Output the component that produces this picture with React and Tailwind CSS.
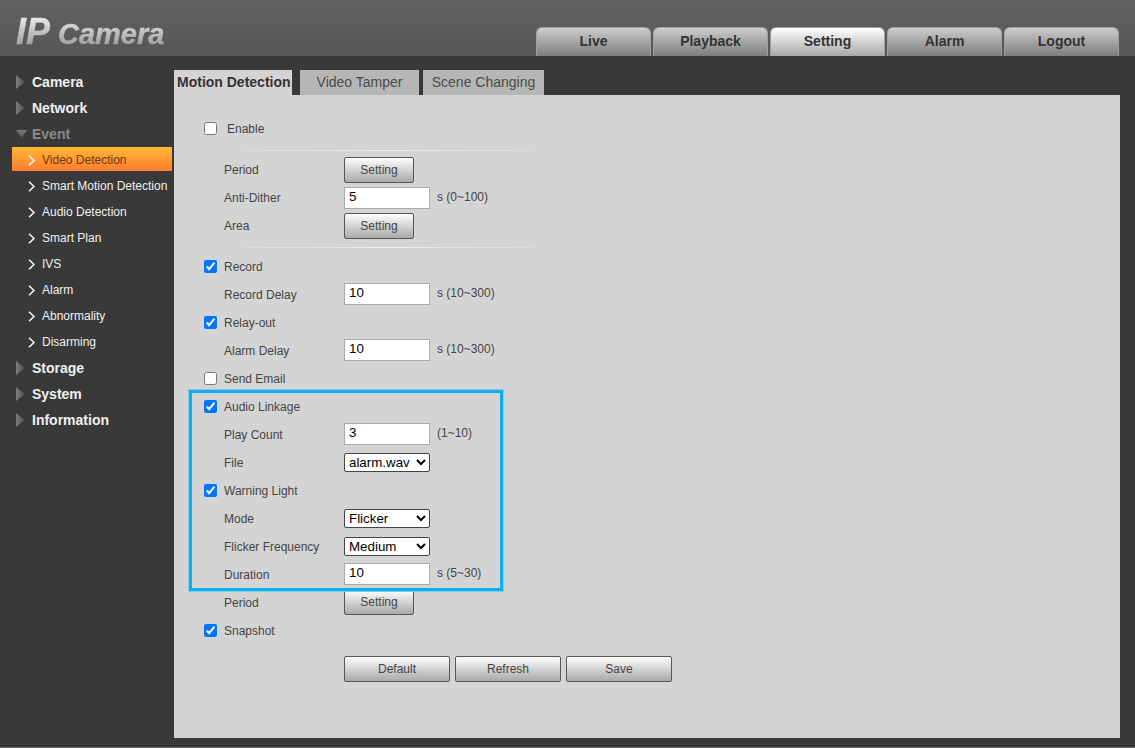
const NAV_TABS = ['Live', 'Playback', 'Setting', 'Alarm', 'Logout'];
const SUB_ITEMS = [
  'Video Detection',
  'Smart Motion Detection',
  'Audio Detection',
  'Smart Plan',
  'IVS',
  'Alarm',
  'Abnormality',
  'Disarming',
];

function Triangle({ down }) {
  return (
    <svg width="12" height="14" viewBox="0 0 12 14" className="shrink-0" aria-hidden="true">
      <defs>
        <linearGradient id="tri-right" x1="0" y1="0" x2="1" y2="0">
          <stop offset="0" stopColor="#7c7c7c" />
          <stop offset="1" stopColor="#4c4c4c" />
        </linearGradient>
        <linearGradient id="tri-down" x1="0" y1="0" x2="0" y2="1">
          <stop offset="0" stopColor="#7c7c7c" />
          <stop offset="1" stopColor="#4c4c4c" />
        </linearGradient>
      </defs>
      {down ? (
        <polygon points="1,3 12,3 6.5,11" fill="url(#tri-down)" />
      ) : (
        <polygon points="1,0 10,7 1,14" fill="url(#tri-right)" />
      )}
    </svg>
  );
}

function Chevron() {
  return (
    <svg width="7" height="11" viewBox="0 0 7 11" fill="none" stroke="#fff" strokeWidth="1.4" className="shrink-0" aria-hidden="true">
      <polyline points="1,0.7 6,5.5 1,10.3" />
    </svg>
  );
}

function MenuHead({ label, down, muted }) {
  return (
    <div className="flex h-[26px] items-center pl-[15px]">
      <Triangle down={down} />
      <span className={`ml-[5px] text-[14px] font-bold ${muted ? 'text-[#8a8a8a]' : 'text-[#f0f0f0]'}`}>{label}</span>
    </div>
  );
}

function Sidebar() {
  return (
    <aside className="w-[174px] shrink-0 pt-[13px]">
      <MenuHead label="Camera" />
      <MenuHead label="Network" />
      <MenuHead label="Event" down muted />
      <div className="mb-px">
        {SUB_ITEMS.map((item, i) => (
          <div
            key={item}
            className={`ml-3 flex w-40 items-center gap-[7px] pl-4 pt-[2px] text-[12px] ${
              i === 0
                ? 'mb-px h-6 bg-gradient-to-b from-[#ffb836] to-[#ff7a30] text-[#6a3a12]'
                : 'h-[26px] text-[#f0f0f0]'
            }`}
          >
            <Chevron />
            <span className="whitespace-nowrap">{item}</span>
          </div>
        ))}
      </div>
      <MenuHead label="Storage" />
      <MenuHead label="System" />
      <MenuHead label="Information" />
    </aside>
  );
}

function Button({ children, wide }) {
  return (
    <button
      type="button"
      className={`h-[26px] rounded-[2px] border border-[#555] bg-gradient-to-b from-white to-[#a9a9a9] text-[12px] text-[#444] ${
        wide ? 'w-[106px]' : 'w-[70px]'
      }`}
    >
      {children}
    </button>
  );
}

function TextBox({ value }) {
  return (
    <input
      type="text"
      defaultValue={value}
      className="h-[22px] w-[86px] border border-[#a9a9a9] bg-white px-1 pb-[3px] text-[13.33px] text-black"
    />
  );
}

function Dropdown({ value }) {
  return (
    <select
      defaultValue={value}
      className="h-[19px] w-[86px] rounded-[2px] border border-[#444] bg-white text-[13.33px] text-black"
    >
      <option>{value}</option>
    </select>
  );
}

function Row({ label, children, hint, raised }) {
  return (
    <div className="flex h-7 items-center pl-[50px] text-[12px] text-[#444]">
      <span className={`w-[120px] shrink-0 whitespace-nowrap ${raised ? 'pb-px' : 'pt-px'}`}>{label}</span>
      {children}
      {hint && <span className="ml-[7px] whitespace-nowrap pb-[2px]">{hint}</span>}
    </div>
  );
}

function CheckRow({ label, checked, enable }) {
  return (
    <label className="flex h-7 items-center pl-[30px] text-[12px] text-[#444]">
      <input type="checkbox" defaultChecked={checked} className="m-0 h-[13px] w-[13px]" />
      <span className={`pt-[2px] ${enable ? 'ml-[10px]' : 'ml-[7px]'}`}>{label}</span>
    </label>
  );
}

function Divider({ className }) {
  return (
    <div className={`ml-[71px] h-px w-[288px] bg-gradient-to-r from-[#dcdcdc] via-[#ececec] to-[#dcdcdc] ${className}`} />
  );
}

export default function App() {
  return (
    <div className="flex h-[748px] w-[1135px] flex-col overflow-hidden bg-[#393939] font-['Liberation_Sans',Arial,sans-serif]">
      {/* Top bar */}
      <header className="flex h-14 shrink-0 items-end justify-between bg-gradient-to-b from-[#626262] to-[#565656] pl-4 pr-4">
        <div className="mb-1 self-end whitespace-nowrap bg-gradient-to-b from-[#f4f4f4] to-[#8e8e8e] bg-clip-text pb-[2px] font-bold italic leading-none text-transparent [-webkit-text-stroke:0.5px_transparent]">
          <span className="text-[36px]">IP</span>
          <span className="ml-2 text-[29px]">Camera</span>
        </div>
        <nav className="flex gap-[2px]">
          {NAV_TABS.map((tab) => (
            <div
              key={tab}
              className={`flex h-[29px] w-[115px] items-center justify-center rounded-t-[6px] border border-b-0 border-[#a0a0a0] pb-[2px] text-[14px] font-bold text-[#333] ${
                tab === 'Setting'
                  ? 'bg-gradient-to-b from-white to-[#a8a8a8]'
                  : 'bg-gradient-to-b from-[#cdcdcd] to-[#7e7e7e]'
              }`}
            >
              {tab}
            </div>
          ))}
        </nav>
      </header>

      <div className="flex min-h-0 flex-1">
        <Sidebar />
        <main className="flex w-[946px] flex-col pt-[14px] pb-[9px]">
          {/* Sub tabs */}
          <div className="flex h-[25px] shrink-0 text-[14px]">
            <div className="flex w-[118px] items-center whitespace-nowrap bg-[#d4d4d4] pl-[3px] font-bold text-[#333]">
              Motion Detection
            </div>
            <div className="ml-2 flex w-[119px] items-center justify-center whitespace-nowrap bg-[#b6b6b6] text-[#4a4a4a]">
              Video Tamper
            </div>
            <div className="ml-1 flex w-[121px] items-center justify-center whitespace-nowrap bg-[#b6b6b6] text-[#4a4a4a]">
              Scene Changing
            </div>
          </div>

          {/* Form panel */}
          <section className="relative flex-1 bg-[#d4d4d4] pt-[19px]">
            <CheckRow label="Enable" enable />
            <Divider className="mt-2 mb-[5px]" />
            <Row label="Period" raised><Button>Setting</Button></Row>
            <Row label="Anti-Dither" hint="s (0~100)" raised><TextBox value="5" /></Row>
            <Row label="Area" raised><Button>Setting</Button></Row>
            <Divider className="mt-[7px] mb-1" />
            <CheckRow label="Record" checked />
            <Row label="Record Delay" hint="s (10~300)"><TextBox value="10" /></Row>
            <CheckRow label="Relay-out" checked />
            <Row label="Alarm Delay" hint="s (10~300)"><TextBox value="10" /></Row>
            <CheckRow label="Send Email" />
            <CheckRow label="Audio Linkage" checked />
            <Row label="Play Count" hint="(1~10)"><TextBox value="3" /></Row>
            <Row label="File"><Dropdown value="alarm.wav" /></Row>
            <CheckRow label="Warning Light" checked />
            <Row label="Mode"><Dropdown value="Flicker" /></Row>
            <Row label="Flicker Frequency"><Dropdown value="Medium" /></Row>
            <Row label="Duration" hint="s (5~30)"><TextBox value="10" /></Row>
            <Row label="Period"><Button>Setting</Button></Row>
            <CheckRow label="Snapshot" checked />
            <div className="mt-3 flex gap-[5px] pl-[170px]">
              <Button wide>Default</Button>
              <Button wide>Refresh</Button>
              <Button wide>Save</Button>
            </div>

            {/* Highlight annotation over the linkage rows */}
            <div className="pointer-events-none absolute top-[295px] left-[15px] h-[201px] w-[314px] border-[3px] border-[#0aaef2] shadow-[0_0_0_1px_#8cc8e2]" />
          </section>
        </main>
      </div>
      <div className="h-px shrink-0 bg-[#6e6e6e]" />
    </div>
  );
}
